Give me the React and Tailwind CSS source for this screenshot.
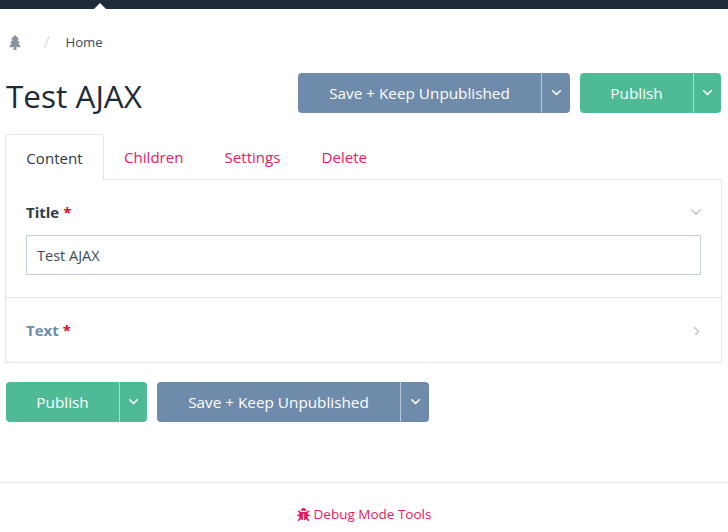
import React from "react";
import { FaTree, FaBug } from "react-icons/fa";

const Chevron = ({ className = "w-[9px] h-[6px]", d = "M1 1l5 5 5-5" }) => (
  <svg className={className} viewBox="0 0 12 8" fill="none" stroke="currentColor" strokeWidth="2" strokeLinecap="round" strokeLinejoin="round">
    <path d={d} />
  </svg>
);

function SplitButton({ label, main, drop, color }) {
  return (
    <div className={`flex h-10 rounded text-white text-[15.3px] ${color}`}>
      <div className={`flex items-center justify-center ${main}`}>{label}</div>
      <div className={`flex items-center justify-center border-l border-white/50 ${drop}`}>
        <Chevron />
      </div>
    </div>
  );
}

const Save = () => <SplitButton label="Save + Keep Unpublished" main="w-[243px]" drop="w-[29px]" color="bg-[#6f8bab]" />;
const Publish = () => <SplitButton label="Publish" main="w-[113px]" drop="w-[28px]" color="bg-[#4fbb96]" />;

export default function App() {
  return (
    <div className="w-[728px] h-[532px] overflow-hidden bg-white text-[#2c3a4a] font-['Open_Sans','Noto_Sans',sans-serif]">
      <div className="relative h-[9px] bg-[#1f2a38]">
        <div className="absolute left-[94px] top-[3px] w-0 h-0 border-x-[6px] border-x-transparent border-b-[6px] border-b-white" />
      </div>

      <nav className="flex items-center h-[20px] mt-[23px] pl-[9px] text-[13.2px] leading-5">
        <FaTree className="text-[#8a94a0] text-[15px] w-[12px]" />
        <span className="ml-[23px] text-[16px] font-light text-[#c9ced8]">/</span>
        <span className="ml-[16px] text-[#3d4a5a]">Home</span>
      </nav>

      <div className="flex items-start justify-between h-10 mt-[21px] pl-[6px] pr-[7px]">
        <h1 className="text-[31.5px] leading-[46px] text-[#1f2a38]">Test AJAX</h1>
        <div className="flex gap-[10px]">
          <Save />
          <Publish />
        </div>
      </div>

      <div className="flex mt-[21px] ml-[5px] mr-[6px] h-[46px] text-[15.1px] text-[#e8195f]">
        <div className="flex items-center justify-center w-[99px] h-[46px] pt-[1px] border border-[#e1e4ee] border-b-0 rounded-t bg-white text-[#2c3a4a] relative z-10">Content</div>
        <div className="flex-1 flex items-center gap-[41px] pl-[20px] pt-[1px] border-b border-[#e1e4ee]">
          <span>Children</span>
          <span>Settings</span>
          <span>Delete</span>
        </div>
      </div>

      <div className="ml-[5px] mr-[6px] border-x border-b border-[#e1e4ee]">
        <div className="px-[20px] pt-[20px] pb-[22px] border-b border-[#e1e4ee]">
          <div className="flex items-center justify-between h-6 font-bold text-[15px] text-[#2c3a4a]">
            <span>Title <span className="text-[#d80e30]">*</span></span>
            <Chevron className="text-[#c3cad6] w-[10px] h-[7px]" />
          </div>
          <div className="flex items-center h-10 mt-[11px] px-[10px] pt-[2px] border border-[#c3cfdf] text-[14.5px] text-[#3d4a5a]">Test AJAX</div>
        </div>
        <div className="flex items-center justify-between h-[64px] pl-[20px] pr-[19px] font-bold text-[15px] text-[#6f8bab]">
          <span>Text <span className="text-[#d80e30]">*</span></span>
          <Chevron className="text-[#c3cad6] w-[10px] h-[10px]" d="M3 1l5 5-5 5" />
        </div>
      </div>

      <div className="flex gap-[10px] mt-[19px] ml-[6px]">
        <Publish />
        <Save />
      </div>

      <footer className="flex items-center justify-center gap-[4px] mt-[60px] h-[40px] pt-[24px] border-t border-[#e1e4ee] text-[13.5px] text-[#e8195f]">
        <FaBug className="text-[13px]" />
        <span>Debug Mode Tools</span>
      </footer>
    </div>
  );
}
